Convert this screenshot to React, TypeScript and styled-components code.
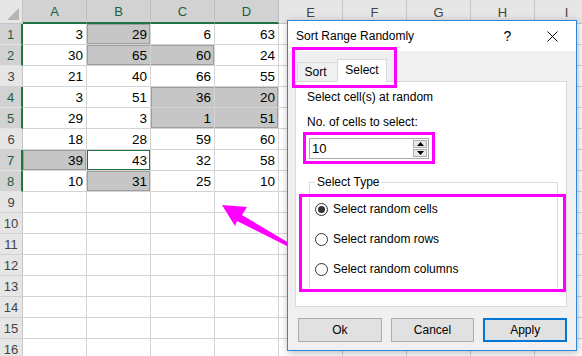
import React from 'react';
import styled, { createGlobalStyle, css } from 'styled-components';

const GlobalStyle = createGlobalStyle`
  html, body { margin: 0; padding: 0; background: #fff; }
  body { width: 582px; height: 356px; overflow: hidden; }
`;

const Stage = styled.div`
  position: relative;
  width: 582px;
  height: 356px;
  overflow: hidden;
  background: #fff;
`;

/* ---------- spreadsheet ---------- */

const Sheet = styled.div`
  display: grid;
  grid-template-columns: 23px repeat(9, 64px);
  grid-template-rows: 24px repeat(16, 21px);
  font-family: "Liberation Sans", Arial, sans-serif;
`;

const Corner = styled.div`
  position: relative;
  box-sizing: border-box;
  background: #e6e6e6;
  border-right: 1px solid #c6c6c6;
  border-bottom: 1px solid #c6c6c6;
  &::after {
    content: "";
    position: absolute;
    right: 3px;
    bottom: 3px;
    width: 0;
    height: 0;
    border-left: 12px solid transparent;
    border-bottom: 12px solid #b5b5b5;
  }
`;

const ColHead = styled.div<{ $sel?: boolean }>`
  box-sizing: border-box;
  display: flex;
  align-items: center;
  justify-content: center;
  font-size: 13px;
  padding-top: 1px;
  background: ${p => (p.$sel ? '#d2d2d2' : '#e6e6e6')};
  color: ${p => (p.$sel ? '#1e5e3a' : '#444')};
  border-right: 1px solid ${p => (p.$sel ? '#bdbdbd' : '#c6c6c6')};
  border-bottom: ${p => (p.$sel ? '2px solid #217346' : '1px solid #c6c6c6')};
`;

const RowHead = styled.div<{ $sel?: boolean }>`
  box-sizing: border-box;
  display: flex;
  align-items: center;
  justify-content: center;
  font-size: 13px;
  background: ${p => (p.$sel ? '#d2d2d2' : '#e6e6e6')};
  color: ${p => (p.$sel ? '#1e5e3a' : '#444')};
  border-right: ${p => (p.$sel ? '2px solid #217346' : '1px solid #c6c6c6')};
  border-bottom: 1px solid ${p => (p.$sel ? '#e2e2e2' : '#d0d0d0')};
`;

const edgeShadow = (edges: string) => {
  const c = '#9e9e9e';
  const parts: string[] = [];
  if (edges.includes('t')) parts.push(`inset 0 1px 0 ${c}`);
  if (edges.includes('b')) parts.push(`inset 0 -1px 0 ${c}`);
  if (edges.includes('l')) parts.push(`inset 1px 0 0 ${c}`);
  if (edges.includes('r')) parts.push(`inset -1px 0 0 ${c}`);
  return parts.join(', ');
};

const Cell = styled.div<{ $edges?: string; $active?: boolean }>`
  box-sizing: border-box;
  display: flex;
  align-items: center;
  justify-content: flex-end;
  padding: 1px 3px 0 0;
  font-size: 13.5px;
  color: #000;
  background: #fff;
  border-right: 1px solid #d4d4d4;
  border-bottom: 1px solid #d4d4d4;
  ${p =>
    p.$edges &&
    css`
      background: #c6c6c6;
      box-shadow: ${edgeShadow(p.$edges)};
    `}
  ${p =>
    p.$active &&
    css`
      box-shadow: inset 0 0 0 1px #217346;
    `}
`;

const ArrowLayer = styled.svg`
  position: absolute;
  left: 0;
  top: 0;
  pointer-events: none;
`;

/* ---------- dialog ---------- */

const Dialog = styled.div`
  position: absolute;
  left: 287px;
  top: 20px;
  width: 290px;
  height: 331px;
  box-sizing: border-box;
  border: 1px solid #2b88d8;
  background: #f0f0f0;
  box-shadow: 1px 2px 8px rgba(0, 0, 0, 0.28);
  display: flex;
  flex-direction: column;
  font-family: "Liberation Sans", Arial, sans-serif;
  font-size: 12px;
  color: #000;
`;

const TitleBar = styled.div`
  height: 30px;
  flex: none;
  background: #fff;
  display: flex;
  align-items: center;
  padding-left: 8px;
`;

const Title = styled.div`
  flex: 1;
  font-size: 12px;
`;

const CaptionButton = styled.div<{ $last?: boolean }>`
  width: 45px;
  height: 30px;
  display: flex;
  align-items: center;
  justify-content: center;
  font-size: 14px;
  margin-right: ${p => (p.$last ? '1px' : '0')};
`;

const Body = styled.div`
  flex: 1;
  display: flex;
  flex-direction: column;
  padding: 8px 9px 0 7px;
`;

const TabStrip = styled.div`
  display: flex;
  align-items: flex-end;
  height: 22px;
  padding-left: 2px;
`;

const Tab = styled.div<{ $active?: boolean }>`
  position: relative;
  box-sizing: border-box;
  display: flex;
  align-items: center;
  justify-content: center;
  border: 1px solid #d9d9d9;
  border-bottom: none;
  ${p =>
    p.$active
      ? css`
          width: 50px;
          height: 23px;
          margin-bottom: -1px;
          background: #fff;
          z-index: 1;
          padding-bottom: 2px;
        `
      : css`
          width: 40px;
          height: 19px;
          background: #f0f0f0;
          border-right: none;
          padding-right: 4px;
        `}
`;

const Panel = styled.div`
  box-sizing: border-box;
  width: 272px;
  height: 226px;
  background: #fff;
  border: 1px solid #d9d9d9;
  padding: 8px 0 0 11px;
  display: flex;
  flex-direction: column;
  align-items: flex-start;
`;

const Line = styled.div<{ $gap?: number }>`
  line-height: 15px;
  margin-top: ${p => p.$gap ?? 0}px;
`;

const SpinBox = styled.div`
  box-sizing: border-box;
  margin: 8px 0 0 2px;
  width: 120px;
  height: 21px;
  border: 1px solid #a9a9a9;
  background: #fff;
  display: flex;
  align-items: center;
  padding: 0 1px 0 2px;
  font-size: 13px;
`;

const SpinValue = styled.div`
  flex: 1;
`;

const SpinButtons = styled.div`
  display: flex;
  flex-direction: column;
  gap: 1px;
`;

const SpinButton = styled.div`
  box-sizing: border-box;
  width: 14px;
  height: 8px;
  border: 1px solid #adadad;
  background: #e8e8e8;
  display: flex;
  align-items: center;
  justify-content: center;
`;

const Group = styled.fieldset`
  box-sizing: border-box;
  margin: 16px 0 0 2px;
  width: 249px;
  border: 1px solid #dcdcdc;
  padding: 5px 0 5px 5px;
  min-width: 0;
`;

const Legend = styled.legend`
  padding: 0 2px;
  margin: 0;
  line-height: 14px;
  font-size: 12px;
`;

const RadioRow = styled.div`
  height: 30px;
  display: flex;
  align-items: center;
  gap: 5px;
`;

const RadioCircle = styled.div<{ $checked?: boolean }>`
  box-sizing: border-box;
  width: 13px;
  height: 13px;
  border-radius: 50%;
  border: 1px solid #333;
  background: #fff;
  display: flex;
  align-items: center;
  justify-content: center;
  &::after {
    content: "";
    width: 7px;
    height: 7px;
    border-radius: 50%;
    background: ${p => (p.$checked ? '#333' : 'transparent')};
  }
`;

const ButtonRow = styled.div`
  display: flex;
  gap: 9px;
  margin-top: 11px;
  padding-left: 3px;
`;

const Button = styled.div<{ $default?: boolean }>`
  box-sizing: border-box;
  width: 84px;
  height: 24px;
  display: flex;
  align-items: center;
  justify-content: center;
  background: #e1e1e1;
  border: ${p => (p.$default ? '2px solid #0078d7' : '1px solid #adadad')};
  font-size: 12px;
`;

const Highlight = styled.div<{ $x: number; $y: number; $w: number; $h: number }>`
  position: absolute;
  left: ${p => p.$x}px;
  top: ${p => p.$y}px;
  width: ${p => p.$w}px;
  height: ${p => p.$h}px;
  box-sizing: border-box;
  border: 3px solid #f0f;
  z-index: 5;
  pointer-events: none;
`;

/* ---------- data ---------- */

const data = [
  [3, 29, 6, 63],
  [30, 65, 60, 24],
  [21, 40, 66, 55],
  [3, 51, 36, 20],
  [29, 3, 1, 51],
  [18, 28, 59, 60],
  [39, 43, 32, 58],
  [10, 31, 25, 10],
];

const selected: Record<string, string> = {
  '0-1': 'trbl',
  '1-1': 'tbl',
  '1-2': 'trb',
  '3-2': 'tl',
  '3-3': 'tr',
  '4-2': 'bl',
  '4-3': 'br',
  '6-0': 'trbl',
  '7-1': 'trbl',
};
const active = '6-1';
const selRows = new Set([0, 1, 3, 4, 6, 7]);
const columns = ['A', 'B', 'C', 'D', 'E', 'F', 'G', 'H', 'I'];

export default function App() {
  return (
    <Stage>
      <GlobalStyle />
      <Sheet>
        <Corner />
        {columns.map((c, i) => (
          <ColHead key={c} $sel={i < 4}>
            {c}
          </ColHead>
        ))}
        {Array.from({ length: 16 }, (_, r) => (
          <React.Fragment key={r}>
            <RowHead $sel={selRows.has(r)}>{r + 1}</RowHead>
            {columns.map((_c, ci) => {
              const key = `${r}-${ci}`;
              const value = r < 8 && ci < 4 ? data[r][ci] : '';
              return (
                <Cell key={key} $edges={selected[key]} $active={key === active}>
                  {value}
                </Cell>
              );
            })}
          </React.Fragment>
        ))}
      </Sheet>

      <ArrowLayer width={582} height={356} viewBox="0 0 582 356">
        <polygon
          points="222,205 247,207 242,215 289,243 289,247 237,221 235,226"
          fill="#f0f"
        />
      </ArrowLayer>

      <Dialog>
        <TitleBar>
          <Title>Sort Range Randomly</Title>
          <CaptionButton>?</CaptionButton>
          <CaptionButton $last>
            <svg width="11" height="11" viewBox="0 0 11 11">
              <path d="M0.5 0.5L10.5 10.5M10.5 0.5L0.5 10.5" stroke="#000" strokeWidth="1" fill="none" />
            </svg>
          </CaptionButton>
        </TitleBar>
        <Body>
          <TabStrip>
            <Tab>Sort</Tab>
            <Tab $active>Select</Tab>
          </TabStrip>
          <Panel>
            <Line>Select cell(s) at random</Line>
            <Line $gap={10}>No. of cells to select:</Line>
            <SpinBox>
              <SpinValue>10</SpinValue>
              <SpinButtons>
                <SpinButton>
                  <svg width="7" height="4" viewBox="0 0 7 4">
                    <path d="M0 4L3.5 0L7 4Z" fill="#000" />
                  </svg>
                </SpinButton>
                <SpinButton>
                  <svg width="7" height="4" viewBox="0 0 7 4">
                    <path d="M0 0L7 0L3.5 4Z" fill="#000" />
                  </svg>
                </SpinButton>
              </SpinButtons>
            </SpinBox>
            <Group>
              <Legend>Select Type</Legend>
              <RadioRow>
                <RadioCircle $checked />
                Select random cells
              </RadioRow>
              <RadioRow>
                <RadioCircle />
                Select random rows
              </RadioRow>
              <RadioRow>
                <RadioCircle />
                Select random columns
              </RadioRow>
            </Group>
          </Panel>
          <ButtonRow>
            <Button>Ok</Button>
            <Button>Cancel</Button>
            <Button $default>Apply</Button>
          </ButtonRow>
        </Body>
        <Highlight $x={4} $y={26} $w={105} $h={41} />
        <Highlight $x={15} $y={111} $w={132} $h={32} />
        <Highlight $x={11} $y={173} $w={267} $h={98} />
      </Dialog>
    </Stage>
  );
}
